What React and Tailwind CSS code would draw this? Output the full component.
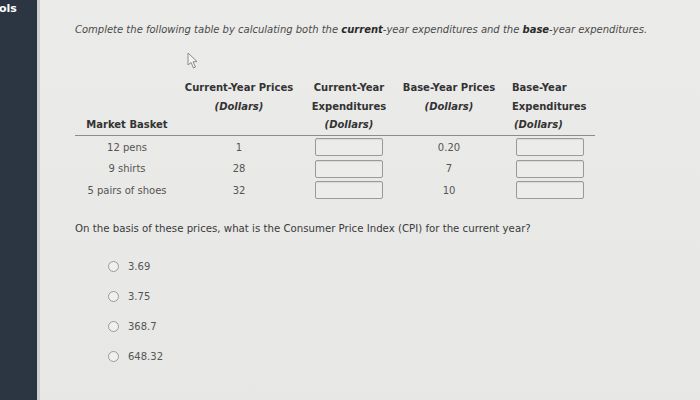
import React from 'react';

const font = { fontFamily: '"DejaVu Sans", Verdana, sans-serif' };

// Cursor drawn in the screenshot
const Cursor = () => (
  <svg width="12" height="18" viewBox="0 0 12 18" className="block">
    <path d="M1 1 L1 13 L4 10.5 L6.5 16 L8.5 15 L6 9.8 L10 9.5 Z" fill="#f4f4f2" stroke="#8a8a8a" strokeWidth="1" strokeLinejoin="round" />
  </svg>
);

const rows = [
  { item: '12 pens', cur: '1', base: '0.20' },
  { item: '9 shirts', cur: '28', base: '7' },
  { item: '5 pairs of shoes', cur: '32', base: '10' },
];

const options = ['3.69', '3.75', '368.7', '648.32'];

const Box = () => (
  <div className="h-[18px] w-[68px] rounded-[2px] border border-[#9a9a98] bg-[#ececea] shadow-[inset_0_1px_1px_rgba(0,0,0,0.08)]" />
);

export default function App() {
  return (
    <div className="flex h-[400px] w-[700px] overflow-hidden bg-[#e9e9e7]" style={font}>
      {/* Sidebar */}
      <div className="w-[37px] shrink-0 bg-[#2c3642] pt-[2px]">
        <span className="block -ml-[1px] text-[11px] font-bold leading-[14px] text-white">ols</span>
      </div>
      <div className="w-[3px] shrink-0 bg-[#cfd0ce]" />

      {/* Main */}
      <div className="flex-1 bg-gradient-to-b from-[#ebebe9] to-[#e7e7e5] pl-[35px] pt-[22px]">
        <p className="text-[10px] italic leading-[16px] text-[#4a4a4a]">
          Complete the following table by calculating both the <b className="text-[#2a2a2a]">current</b>-year expenditures and the <b className="text-[#2a2a2a]">base</b>-year expenditures.
        </p>

        <div className="ml-[112px] mt-[14px] h-[17px]">
          <Cursor />
        </div>

        {/* Table */}
        <div className="mt-[10px] w-[520px]">
          <div className="grid grid-cols-[104px_120px_100px_100px_96px] border-b border-[#8c8c8a] text-[10px] font-bold leading-[18.5px] text-[#333]">
            <div className="text-center">
              <div className="h-[18.5px]" />
              <div className="h-[18.5px]" />
              <div>Market Basket</div>
            </div>
            <div className="text-center">
              <div>Current-Year Prices</div>
              <div className="italic">(Dollars)</div>
            </div>
            <div className="text-center">
              <div>Current-Year</div>
              <div>Expenditures</div>
              <div className="italic">(Dollars)</div>
            </div>
            <div className="text-center">
              <div>Base-Year Prices</div>
              <div className="italic">(Dollars)</div>
            </div>
            <div className="pl-[13px]">
              <div>Base-Year</div>
              <div>Expenditures</div>
              <div className="pl-[2px] italic">(Dollars)</div>
            </div>
          </div>

          <div className="pt-[1px] text-[10px] text-[#555]">
            {rows.map((r) => (
              <div key={r.item} className="grid h-[21.5px] grid-cols-[104px_120px_100px_100px_96px] items-center">
                <div className="text-center">{r.item}</div>
                <div className="text-center">{r.cur}</div>
                <div className="flex justify-center"><Box /></div>
                <div className="text-center">{r.base}</div>
                <div className="pl-[17px]"><Box /></div>
              </div>
            ))}
          </div>
        </div>

        <p className="mt-[20px] text-[10.2px] leading-[16px] text-[#3a3a3a]">
          On the basis of these prices, what is the Consumer Price Index (CPI) for the current year?
        </p>

        <div className="mt-[14px] pl-[33px]">
          {options.map((o) => (
            <div key={o} className="flex h-[30px] items-center gap-[9px] text-[10px] text-[#555]">
              <span className="h-[11px] w-[11px] rounded-full border border-[#9a9a98] bg-[#f0f0ee]" />
              <span>{o}</span>
            </div>
          ))}
        </div>
      </div>
    </div>
  );
}
